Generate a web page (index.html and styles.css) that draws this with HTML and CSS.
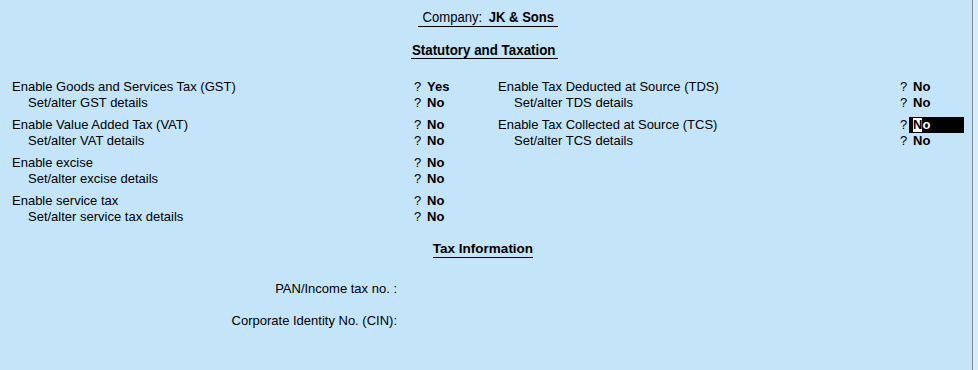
FILE: index.html
```html
<!DOCTYPE html>
<html>
<head>
<meta charset="utf-8">
<link rel="stylesheet" href="styles.css">
</head>
<body>
<div class="screen">
  <div class="panel">
    <div class="head">
      <div class="company"><span class="narrow"><span class="lbl">Company:</span> <b>JK &amp; Sons</b></span></div>
      <div class="title"><span class="narrow">Statutory and Taxation</span></div>
    </div>
    <div class="cols">
      <div class="col">
        <div class="group">
          <div class="row"><span class="label">Enable Goods and Services Tax (GST)</span><span class="q">?</span><span class="val">Yes</span></div>
          <div class="row sub"><span class="label">Set/alter GST details</span><span class="q">?</span><span class="val">No</span></div>
        </div>
        <div class="group">
          <div class="row"><span class="label">Enable Value Added Tax (VAT)</span><span class="q">?</span><span class="val">No</span></div>
          <div class="row sub"><span class="label">Set/alter VAT details</span><span class="q">?</span><span class="val">No</span></div>
        </div>
        <div class="group">
          <div class="row"><span class="label">Enable excise</span><span class="q">?</span><span class="val">No</span></div>
          <div class="row sub"><span class="label">Set/alter excise details</span><span class="q">?</span><span class="val">No</span></div>
        </div>
        <div class="group">
          <div class="row"><span class="label">Enable service tax</span><span class="q">?</span><span class="val">No</span></div>
          <div class="row sub"><span class="label">Set/alter service tax details</span><span class="q">?</span><span class="val">No</span></div>
        </div>
      </div>
      <div class="col">
        <div class="group">
          <div class="row"><span class="label">Enable Tax Deducted at Source (TDS)</span><span class="q">?</span><span class="val">No</span></div>
          <div class="row sub"><span class="label">Set/alter TDS details</span><span class="q">?</span><span class="val">No</span></div>
        </div>
        <div class="group">
          <div class="row"><span class="label">Enable Tax Collected at Source (TCS)</span><span class="q">?</span><span class="val active"><span class="cursor">N</span>o</span></div>
          <div class="row sub"><span class="label">Set/alter TCS details</span><span class="q">?</span><span class="val">No</span></div>
        </div>
      </div>
    </div>
    <div class="section">Tax Information</div>
    <div class="info">
      <div class="irow"><span class="ilabel">PAN/Income tax no. :</span></div>
      <div class="irow"><span class="ilabel">Corporate Identity No. (CIN):</span></div>
    </div>
  </div>
  <div class="edge"></div>
</div>
</body>
</html>
```
FILE: styles.css
```css
html, body {
  margin: 0;
  padding: 0;
  background: #c4e4f9;
}
body {
  font-family: "Liberation Sans", Arial, sans-serif;
  font-size: 13px;
  color: #000;
}
.screen {
  display: flex;
  width: 978px;
  height: 370px;
  overflow: hidden;
}
.panel {
  width: 972px;
  border-right: 1px solid #7f8a94;
  background: #c4e4f9;
}
.edge {
  flex: 1;
  background: #d6ecfa;
}
.head {
  display: flex;
  flex-direction: column;
  align-items: center;
  padding-top: 9px;
}
.narrow {
  display: inline-block;
  flex: none;
  transform-origin: center;
  white-space: nowrap;
}
.company {
  display: flex;
  justify-content: center;
  font-size: 14px;
  line-height: 17px;
  width: 140px;
  border-bottom: 1px solid #000;
  position: relative;
  left: 2px;
}
.company .narrow { transform: scaleX(0.935); }
.company .lbl { font-weight: normal; margin-right: 3px; }
.title {
  display: flex;
  justify-content: center;
  margin-top: 14px;
  width: 147px;
  font-size: 15px;
  font-weight: bold;
  line-height: 17px;
  border-bottom: 1px solid #000;
  position: relative;
  left: -2px;
}
.title .narrow { transform: scaleX(0.89); }
.cols {
  display: grid;
  grid-template-columns: 486px 486px;
  margin-top: 20px;
}
.col {
  padding-left: 12px;
  display: flex;
  flex-direction: column;
  gap: 6px;
}
.row {
  display: grid;
  grid-template-columns: 401px 12px 53px;
  height: 16px;
  line-height: 16px;
}
.row.sub .label { padding-left: 16px; }
.q { padding-left: 1px; }
.val {
  font-weight: bold;
  padding-left: 4px;
  margin-left: -2px;
}
.val.active {
  background: #000;
  color: #fff;
}
.cursor {
  background: #fff;
  color: #000;
  display: inline-block;
  line-height: 14px;
}
.section {
  width: max-content;
  margin: 16px auto 0;
  font-weight: bold;
  font-size: 13.5px;
  line-height: 16px;
  border-bottom: 1px solid #000;
  position: relative;
  left: -3px;
}
.info {
  margin-top: 23px;
  display: flex;
  flex-direction: column;
  gap: 16px;
}
.irow {
  width: 397px;
  text-align: right;
  line-height: 16px;
}
```
